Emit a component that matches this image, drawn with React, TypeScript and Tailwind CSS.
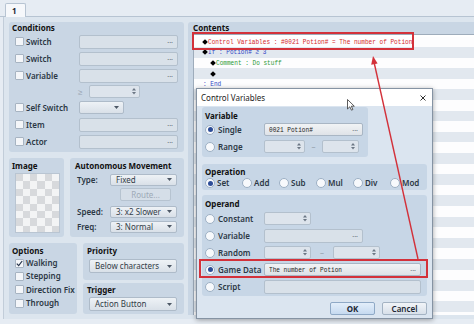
import React from 'react';

const mono = "inline-block origin-left scale-x-[0.76] font-['Liberation_Mono','DejaVu_Sans_Mono',monospace] text-[8px] leading-none whitespace-nowrap";

function Caret() {
  return (
    <svg width="5" height="3" viewBox="0 0 5 3" className="shrink-0">
      <path d="M0 0H5L2.5 3Z" fill="#4d5866" />
    </svg>
  );
}

function SpinArrows() {
  return (
    <div className="flex flex-col gap-[1.5px]">
      <svg width="4" height="2.5" viewBox="0 0 4 2.5">
        <path d="M0 2.5H4L2 0Z" fill="#6b7684" />
      </svg>
      <svg width="4" height="2.5" viewBox="0 0 4 2.5">
        <path d="M0 0H4L2 2.5Z" fill="#6b7684" />
      </svg>
    </div>
  );
}

function Check({ on = false }: { on?: boolean }) {
  return (
    <div className="w-[9px] h-[9px] shrink-0 bg-[#f4f6f9] border border-[#a7b4c2] rounded-[1px] flex items-center justify-center">
      {on && (
        <svg width="7" height="7" viewBox="0 0 7 7">
          <path d="M0.8 3.6L2.7 5.6L6.2 1" stroke="#25334a" strokeWidth="1.2" fill="none" />
        </svg>
      )}
    </div>
  );
}

function Radio({ on = false }: { on?: boolean }) {
  return (
    <div className="w-[10px] h-[10px] shrink-0 rounded-full bg-[#f7f9fc] border border-[#9db0c4] flex items-center justify-center">
      {on && <div className="w-[5px] h-[5px] rounded-full bg-[#2d4d98]" />}
    </div>
  );
}

function Field({ className = '', dots = false, children }: { className?: string; dots?: boolean; children?: React.ReactNode }) {
  return (
    <div className={`h-[14px] flex items-center justify-between pl-[4px] pr-[4px] border border-[#b3c0cd] rounded-[2px] ${className}`}>
      <span className={mono + ' text-[#222]'}>{children}</span>
      {dots && <span className="text-[7px] leading-none text-[#5f6a77] -mt-[3px]">...</span>}
    </div>
  );
}

function Spin({ className = '' }: { className?: string }) {
  return (
    <div className={`h-[13px] flex items-center justify-end pr-[3px] bg-[#dde4ec] border border-[#b3c0cd] rounded-[2px] ${className}`}>
      <SpinArrows />
    </div>
  );
}

function Drop({ text = '', className = '' }: { text?: string; className?: string }) {
  return (
    <div className={`flex items-center justify-between pl-[5px] pr-[4px] bg-linear-to-b from-[#eef2f6] to-[#d9e0e8] border border-[#aebbc9] rounded-[2px] text-[8px] text-[#333d48] ${className}`}>
      <span className="leading-none">{text}</span>
      <Caret />
    </div>
  );
}

function CondRow({ label, children }: { label: string; children?: React.ReactNode }) {
  return (
    <div className="h-[17px] flex items-center pl-[6px]">
      <Check />
      <span className="ml-[2px] w-[53px] font-semibold text-[#2c3845]">{label}</span>
      {children}
    </div>
  );
}

function OptRow({ label, on = false }: { label: string; on?: boolean }) {
  return (
    <div className="h-[13.3px] flex items-center pl-[6px]">
      <Check on={on} />
      <span className="ml-[2px] font-semibold text-[#2c3845]">{label}</span>
    </div>
  );
}

function OpRow({ label, on = false, children }: { label: string; on?: boolean; children?: React.ReactNode }) {
  return (
    <div className="h-[17px] flex items-center pl-[3px]">
      <Radio on={on} />
      <span className="ml-[3px] w-[46px] font-semibold text-[#2c3845]">{label}</span>
      {children}
    </div>
  );
}

function Diamond() {
  return <div className="w-[4px] h-[4px] ml-[0.5px] mr-[1.5px] rotate-45 bg-black shrink-0" />;
}

const opNames = ['Set', 'Add', 'Sub', 'Mul', 'Div', 'Mod'];

export default function App() {
  const stripes = Array.from({ length: 27 }, (_, i) => i);
  const checks = Array.from({ length: 48 }, (_, i) => i);

  return (
    <div className="relative w-[474px] h-[324px] overflow-hidden bg-[#e6ecf3] font-['Noto_Sans',sans-serif] text-[8px] text-[#1e2630]">
      {/* tab strip */}
      <div className="h-[17px] flex items-end pl-[5px] border-b border-[#b7c4d2]">
        <div className="w-[21px] h-[14px] -mb-px bg-[#f6f8fb] border border-b-0 border-[#b7c4d2] rounded-t-[2px] pl-[6px] pt-[2px] font-bold leading-[10px]">
          1
        </div>
      </div>

      {/* page */}
      <div className="flex h-[302px] pt-[5px] bg-[#dce5ee] border-l border-[#c2cdd9] ml-[3px]">
        {/* left column */}
        <div className="w-[180px] pl-[5px] flex flex-col gap-[6px]">
          {/* Conditions */}
          <div className="h-[130px] bg-[#c9d6e4] rounded-[3px]">
            <div className="pl-[3px] pt-[1px] leading-[10px] font-bold text-[#111]">Conditions</div>
            <CondRow label="Switch">
              <Field className="w-[99px] bg-[#d9e1e9]" dots />
            </CondRow>
            <CondRow label="Switch">
              <Field className="w-[99px] bg-[#d9e1e9]" dots />
            </CondRow>
            <CondRow label="Variable">
              <Field className="w-[99px] bg-[#d9e1e9]" dots />
            </CondRow>
            <div className="h-[15px] flex items-center pl-[69px]">
              <span className="w-[11px] text-[#97a3b0]">≥</span>
              <Spin className="w-[51px]" />
            </div>
            <CondRow label="Self Switch">
              <Drop className="w-[45px] h-[13px]" />
            </CondRow>
            <CondRow label="Item">
              <Field className="w-[99px] bg-[#d9e1e9]" dots />
            </CondRow>
            <CondRow label="Actor">
              <Field className="w-[99px] bg-[#d9e1e9]" dots />
            </CondRow>
          </div>

          {/* Image + Autonomous Movement */}
          <div className="flex gap-[6px] h-[79px]">
            <div className="w-[55px] bg-[#c9d6e4] rounded-[3px]">
              <div className="pl-[3px] pt-[3px] leading-[10px] font-bold text-[#111]">Image</div>
              <div className="ml-[6px] mt-[2px] w-[45px] h-[60px] border border-[#b9c5d2] grid grid-cols-6 overflow-hidden">
                {checks.map((i) => (
                  <div
                    key={i}
                    className={(Math.floor(i / 6) + (i % 6)) % 2 === 0 ? 'h-[7.4px] bg-[#d7d9dc]' : 'h-[7.4px] bg-[#f3f4f5]'}
                  />
                ))}
              </div>
            </div>
            <div className="w-[114px] bg-[#c9d6e4] rounded-[3px] pl-[5px]">
              <div className="pt-[3px] leading-[10px] font-bold text-[#111]">Autonomous Movement</div>
              <div className="mt-[2px] h-[13px] flex items-center pl-[2px]">
                <span className="w-[33px] font-semibold text-[#2c3845]">Type:</span>
                <Drop text="Fixed" className="w-[67px] h-[12px]" />
              </div>
              <div className="mt-[2px] h-[13px] pl-[45px]">
                <div className="w-[51px] h-[13px] border border-[#b6c3d0] rounded-[2px] bg-[#d5dee8] flex items-center justify-center text-[#9eaab7] leading-none">
                  Route...
                </div>
              </div>
              <div className="mt-[4px] h-[13px] flex items-center pl-[2px]">
                <span className="w-[33px] font-semibold text-[#2c3845]">Speed:</span>
                <Drop text="3: x2 Slower" className="w-[67px] h-[12px]" />
              </div>
              <div className="mt-[2px] h-[13px] flex items-center pl-[2px]">
                <span className="w-[33px] font-semibold text-[#2c3845]">Freq:</span>
                <Drop text="3: Normal" className="w-[67px] h-[12px]" />
              </div>
            </div>
          </div>

          {/* Options + Priority/Trigger */}
          <div className="flex gap-[6px] h-[71px]">
            <div className="w-[68px] bg-[#c9d6e4] rounded-[3px]">
              <div className="pl-[3px] pt-[3px] leading-[10px] font-bold text-[#111]">Options</div>
              <div className="mt-[0.5px]">
                <OptRow label="Walking" on />
                <OptRow label="Stepping" />
                <OptRow label="Direction Fix" />
                <OptRow label="Through" />
              </div>
            </div>
            <div className="w-[101px] flex flex-col gap-[3px]">
              <div className="h-[37px] bg-[#c9d6e4] rounded-[3px] pl-[4px]">
                <div className="pt-[3px] leading-[10px] font-bold text-[#111]">Priority</div>
                <Drop text="Below characters" className="mt-[3px] ml-[2px] w-[88px] h-[14px]" />
              </div>
              <div className="h-[31px] bg-[#c9d6e4] rounded-[3px] pl-[4px]">
                <div className="pt-[2px] leading-[10px] font-bold text-[#111]">Trigger</div>
                <Drop text="Action Button" className="mt-[2px] ml-[2px] w-[88px] h-[14px]" />
              </div>
            </div>
          </div>
        </div>

        {/* Contents */}
        <div className="ml-[4px] flex-1 flex flex-col bg-[#c9d6e4] rounded-tl-[3px] pl-[5px] mb-[4px]">
          <div className="pt-[1px] leading-[10px] font-bold text-[#111]">Contents</div>
          <div className="mt-[1px] flex-1 bg-white border-l border-t border-[#9eacbb] pt-[1.5px] overflow-hidden">
            {stripes.map((i) => (
              <div
                key={i}
                className={`h-[10.6px] flex items-center ${i % 2 === 1 ? 'bg-[#e2e8ef]' : 'bg-[#fdfdfe]'}`}
              >
                {i === 0 && (
                  <div className="pl-[8px] flex items-center">
                    <Diamond />
                    <span className={mono + ' text-[#d42a2a]'}>Control Variables : #0021 Potion# = The number of Potion</span>
                  </div>
                )}
                {i === 1 && (
                  <div className="pl-[8px] flex items-center">
                    <Diamond />
                    <span className={mono + ' text-[#2f45c4]'}>If : Potion# ≥ 3</span>
                  </div>
                )}
                {i === 2 && (
                  <div className="pl-[16px] flex items-center">
                    <Diamond />
                    <span className={mono + ' text-[#2b9a34]'}>Comment : Do stuff</span>
                  </div>
                )}
                {i === 3 && (
                  <div className="pl-[16px] flex items-center">
                    <Diamond />
                  </div>
                )}
                {i === 4 && (
                  <div className="pl-[9px] flex items-center">
                    <span className={mono + ' text-[#2f45c4]'}>: End</span>
                  </div>
                )}
              </div>
            ))}
          </div>
        </div>
      </div>

      {/* Control Variables dialog */}
      <div className="absolute left-[196px] top-[88px] w-[237px] h-[231px] bg-[#dbe5f0] border border-[#8593a3] shadow-[0_1px_5px_rgba(0,0,0,0.35)] flex flex-col">
        <div className="h-[17px] bg-white flex items-center justify-between pl-[4px] pr-[6px]">
          <span className="text-[#222] leading-none">Control Variables</span>
          <svg width="6" height="6" viewBox="0 0 6 6">
            <path d="M0.5 0.5L5.5 5.5M5.5 0.5L0.5 5.5" stroke="#333" strokeWidth="1" />
          </svg>
        </div>
        <div className="px-[5px] pt-[1px] flex flex-col">
          {/* Variable */}
          <div className="w-[166px] h-[50px] bg-[#c7d6e6] rounded-[3px]">
            <div className="pl-[3px] pt-[3px] leading-[11px] font-bold text-[#111]">Variable</div>
            <OpRow label="Single" on>
              <div className="w-[99px] h-[13px] flex items-center justify-between pl-[4px] pr-[4px] bg-linear-to-b from-[#f1f3f5] to-[#dfe3e8] border border-[#a9b6c4] rounded-[2px]">
                <span className={mono + ' text-[#222]'}>0021 Potion#</span>
                <span className="text-[7px] leading-none text-[#5f6a77] -mt-[3px]">...</span>
              </div>
            </OpRow>
            <OpRow label="Range">
              <Spin className="w-[41px]" />
              <span className="w-[17px] text-center text-[#97a3b0]">–</span>
              <Spin className="w-[37px]" />
            </OpRow>
          </div>

          {/* Operation */}
          <div className="mt-[7px] h-[26px] bg-[#c7d6e6] rounded-[3px]">
            <div className="pl-[3px] pt-[2px] leading-[11px] font-bold text-[#111]">Operation</div>
            <div className="h-[12px] flex items-center pl-[3px]">
              {opNames.map((n, i) => (
                <div key={n} className="w-[37.2px] flex items-center">
                  <Radio on={i === 0} />
                  <span className="ml-[2px] font-semibold text-[#2c3845]">{n}</span>
                </div>
              ))}
            </div>
          </div>

          {/* Operand */}
          <div className="mt-[5px] h-[101px] bg-[#c7d6e6] rounded-[3px]">
            <div className="pl-[3px] pt-[3px] leading-[12px] font-bold text-[#111]">Operand</div>
            <OpRow label="Constant">
              <Spin className="w-[47px]" />
            </OpRow>
            <OpRow label="Variable">
              <Field className="w-[99px] bg-[#d9e1e9]" dots />
            </OpRow>
            <OpRow label="Random">
              <Spin className="w-[47px]" />
              <span className="w-[22px] text-center text-[#97a3b0]">–</span>
              <Spin className="w-[47px]" />
            </OpRow>
            <OpRow label="Game Data" on>
              <div className="w-[157px] h-[13px] flex items-center justify-between pl-[4px] pr-[4px] bg-linear-to-b from-[#f1f3f5] to-[#dde2e7] border border-[#a9b6c4] rounded-[2px]">
                <span className={mono + ' text-[#222]'}>The number of Potion</span>
                <span className="text-[7px] leading-none text-[#5f6a77] -mt-[3px]">...</span>
              </div>
            </OpRow>
            <OpRow label="Script">
              <Field className="w-[157px] bg-[#d9e1e9]" />
            </OpRow>
          </div>

          {/* Buttons */}
          <div className="mt-[6px] flex justify-end gap-[7px]">
            <div className="w-[45px] h-[13px] flex items-center justify-center bg-linear-to-b from-[#e3eefa] to-[#c6daf0] border border-[#8fa9c6] rounded-[2px] font-bold text-[#1d2733] leading-none">
              OK
            </div>
            <div className="w-[45px] h-[13px] flex items-center justify-center bg-linear-to-b from-[#f1f4f8] to-[#d8e0e9] border border-[#a4b3c3] rounded-[2px] font-semibold text-[#1d2733] leading-none">
              Cancel
            </div>
          </div>
        </div>
      </div>

      {/* red highlight boxes */}
      <div className="absolute left-[192px] top-[32px] w-[222px] h-[18px] border-2 border-[#d3313a] pointer-events-none" />
      <div className="absolute left-[199px] top-[259px] w-[229px] h-[19px] border-2 border-[#d3313a] pointer-events-none" />

      {/* arrow */}
      <svg className="absolute left-0 top-0 pointer-events-none" width="474" height="324" viewBox="0 0 474 324">
        <line x1="374" y1="62" x2="418" y2="259" stroke="#d3313a" strokeWidth="1.4" />
        <path d="M373 56L377.6 63.4L371.2 64.8Z" fill="#d3313a" />
      </svg>

      {/* mouse cursor */}
      <svg className="absolute left-[347px] top-[99px] pointer-events-none" width="8" height="12" viewBox="0 0 8 12">
        <path d="M0.5 0.5V10L2.8 7.8L4.5 11.2L5.9 10.5L4.3 7.2H7.3Z" fill="#fff" stroke="#333" strokeWidth="0.8" strokeLinejoin="round" />
      </svg>
    </div>
  );
}
